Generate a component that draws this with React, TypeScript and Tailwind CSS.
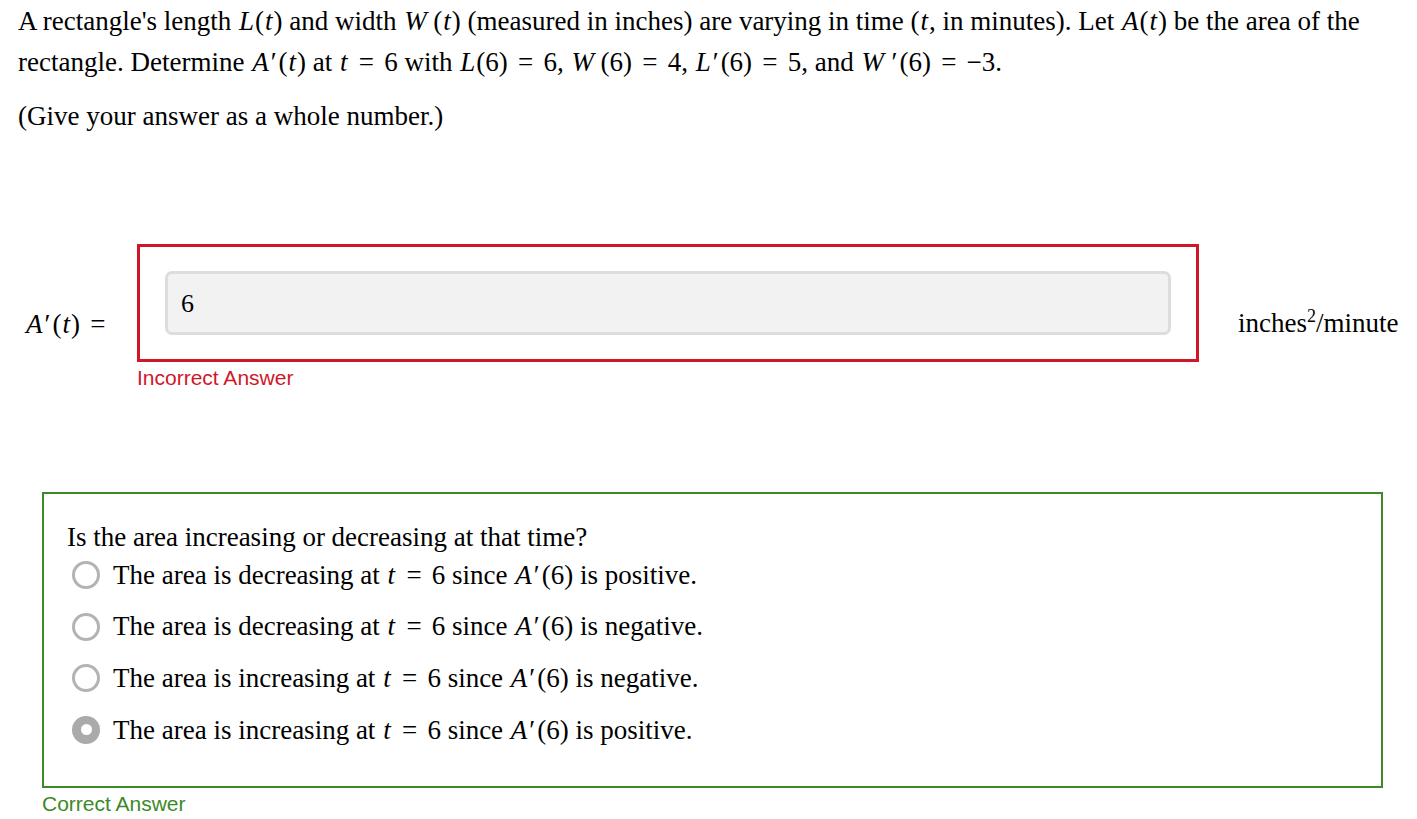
import React from "react";

const I = ({ children }: { children: React.ReactNode }) => <i className="italic px-[1px]">{children}</i>;
const Eq = () => <span className="mx-[0.38em]">=</span>;
const P = () => <span className="ml-[1px] mr-[2px]">′</span>;

function Radio({ checked }: { checked?: boolean }) {
  return checked ? (
    <span className="inline-flex w-[28px] h-[28px] rounded-full bg-[#aaaaaa] items-center justify-center shrink-0">
      <span className="w-[11px] h-[11px] rounded-full bg-white" />
    </span>
  ) : (
    <span className="inline-block w-[28px] h-[28px] rounded-full border-[3px] border-[#b3b3b3] bg-white shrink-0" />
  );
}

const options: { pre: string; post: string; checked?: boolean }[] = [
  { pre: "The area is decreasing at ", post: " is positive." },
  { pre: "The area is decreasing at ", post: " is negative." },
  { pre: "The area is increasing at ", post: " is negative." },
  { pre: "The area is increasing at ", post: " is positive.", checked: true },
];

export default function App() {
  return (
    <div className="w-[1417px] h-[819px] bg-white text-black overflow-hidden font-['Liberation_Serif',serif] text-[27px]">
      <div className="pl-[18px] pr-[20px] pt-[1px]">
        <p className="leading-[41px]">
          A rectangle's length <I>L</I>(<I>t</I>) and width <I>W</I>&thinsp;(<I>t</I>) (measured in inches) are varying in time (<I>t</I>, in minutes). Let <I>A</I>(<I>t</I>) be the area of the rectangle. Determine <I>A</I><P />(<I>t</I>) at <I>t</I><Eq />6 with <I>L</I>(6)<Eq />6, <I>W</I>&thinsp;(6)<Eq />4, <I>L</I><P />(6)<Eq />5, and <I>W</I>&thinsp;<P />(6)<Eq />−3.
        </p>
        <p className="leading-[41px] mt-[13px]">(Give your answer as a whole number.)</p>
      </div>

      <div className="mt-[107px] flex items-start">
        <div className="w-[137px] pl-[25px] pt-[60px] leading-[41px]">
          <I>A</I><P />(<I>t</I>)<Eq />
        </div>
        <div className="flex flex-col">
          <div className="w-[1062px] h-[118px] border-[3px] border-[#d0172a] px-[25px] pt-[24px]">
            <div className="h-[64px] bg-[#f2f2f2] border-[3px] border-[#dddddd] rounded-[7px] flex items-center pl-[13px] font-['Liberation_Serif',serif] text-[26px]">
              6
            </div>
          </div>
          <div className="mt-[3px] text-[21px] leading-[26px] text-[#d0172a] font-['Liberation_Sans',sans-serif]">
            Incorrect Answer
          </div>
        </div>
        <div className="pl-[39px] pt-[59px] leading-[41px]">
          inches<sup className="text-[18px] relative -top-[10px]">2</sup>/minute
        </div>
      </div>

      <div className="ml-[42px] mt-[101px] w-[1341px]">
        <div className="h-[296px] border-2 border-[#3b8a27] pl-[23px] pt-[25px]">
          <div className="leading-[36px]">Is the area increasing or decreasing at that time?</div>
          <div className="flex flex-col -mt-[6px]">
            {options.map((o, i) => (
              <div key={i} className="flex items-center h-[51.7px] pl-[5px] gap-[13px]">
                <Radio checked={o.checked} />
                <span>
                  {o.pre}
                  <I>t</I><Eq />6 since <I>A</I><P />(6){o.post}
                </span>
              </div>
            ))}
          </div>
        </div>
        <div className="mt-[3px] text-[21px] leading-[26px] text-[#3b8a27] font-['Liberation_Sans',sans-serif]">
          Correct Answer
        </div>
      </div>
    </div>
  );
}
